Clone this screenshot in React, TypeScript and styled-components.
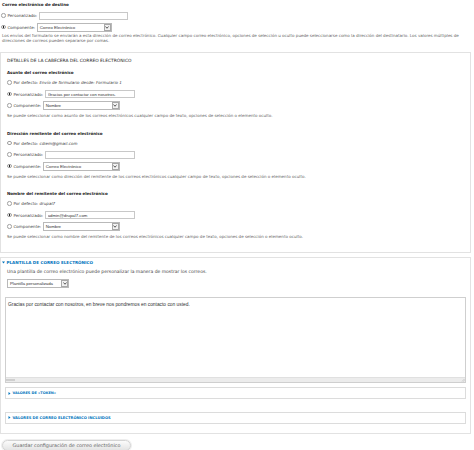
import styled, { createGlobalStyle } from "styled-components";

const GlobalStyle = createGlobalStyle`
  html, body {
    margin: 0;
    padding: 0;
    background: #fff;
  }
  body {
    font-family: "DejaVu Sans", Verdana, sans-serif;
    color: #333;
  }
`;

const Page = styled.div`
  width: 474px;
  padding-top: 2px;
`;

const TopSection = styled.div`
  padding-left: 1px;
`;

const Title = styled.div<{ $indent?: number }>`
  height: 6px;
  line-height: 6px;
  font-size: 4px;
  font-weight: bold;
  color: #222;
  white-space: nowrap;
  padding-left: ${(p) => p.$indent ?? 0}px;
`;

const Label = styled(Title)<{ $top: number }>`
  margin-top: ${(p) => p.$top}px;
`;

const RadioRow = styled.div<{ $top: number }>`
  display: flex;
  align-items: center;
  height: 9px;
  margin-top: ${(p) => p.$top}px;
  font-size: 4.1px;
  color: #444;
  white-space: nowrap;
`;

const Radio = styled.span<{ $checked?: boolean }>`
  box-sizing: border-box;
  width: 4.5px;
  height: 4.5px;
  border-radius: 50%;
  border: 1px solid #a0a0a0;
  background: ${(p) => (p.$checked ? "radial-gradient(circle, #222 0 45%, #fff 55%)" : "#fff")};
  flex: none;
`;

const RadioText = styled.span`
  margin-left: 2px;
  margin-right: 1.5px;
  em {
    font-style: italic;
  }
`;

const TextInput = styled.input<{ $w: number }>`
  box-sizing: border-box;
  width: ${(p) => p.$w}px;
  height: 8px;
  border: 1px solid #c8c8c8;
  padding: 0 2px;
  margin: 0;
  font-family: "Liberation Sans", Arial, sans-serif;
  font-size: 4.3px;
  color: #333;
  background: #fff;
  outline: none;
`;

const SelectBox = styled.div<{ $w: number }>`
  box-sizing: border-box;
  width: ${(p) => p.$w}px;
  height: 9px;
  border: 1px solid #b9b9b9;
  display: flex;
  align-items: center;
  background: #fff;
  font-family: "Liberation Sans", Arial, sans-serif;
  font-size: 4.3px;
  color: #333;
`;

const SelectText = styled.span`
  flex: 1;
  padding-left: 2px;
  white-space: nowrap;
  overflow: hidden;
`;

const SelectArrow = styled.span`
  box-sizing: border-box;
  width: 7px;
  height: 7px;
  border: 1px solid #a8a8a8;
  background: #f2f2f2;
  display: flex;
  align-items: center;
  justify-content: center;
  flex: none;
`;

const Description = styled.div<{ $top: number; $indent?: number }>`
  margin-top: ${(p) => p.$top}px;
  padding-left: ${(p) => p.$indent ?? 0}px;
  font-size: 4.05px;
  line-height: 5px;
  color: #666;
  padding-right: 6px;
`;

const Fieldset = styled.section<{ $top: number; $pad: string }>`
  margin: ${(p) => p.$top}px 3px 0 0;
  border: 1px solid #e2e2e2;
  padding: ${(p) => p.$pad};
  background: #fff;
`;

const Legend = styled.div`
  height: 6px;
  line-height: 6px;
  font-size: 4.4px;
  color: #222;
  white-space: nowrap;
`;

const LinkLegend = styled.div<{ $size: number; $shift?: number }>`
  display: flex;
  align-items: center;
  gap: 1.5px;
  height: 6px;
  margin-left: ${(p) => p.$shift ?? 0}px;
  font-size: ${(p) => p.$size}px;
  font-weight: bold;
  color: #0074bd;
  white-space: nowrap;
`;

const Plain = styled.div<{ $top: number }>`
  margin-top: ${(p) => p.$top}px;
  padding-left: 2px;
  height: 6px;
  line-height: 6px;
  font-size: 4.5px;
  color: #444;
  white-space: nowrap;
`;

const SelectWrap = styled.div<{ $top: number }>`
  margin-top: ${(p) => p.$top}px;
  padding-left: 2px;
`;

const TextArea = styled.div`
  margin-top: 9px;
  height: 84px;
  border: 1px solid #cfcfcf;
  display: flex;
  flex-direction: column;
`;

const TextAreaBody = styled.div`
  flex: 1;
  padding: 4px 2px 0;
  font-family: "Liberation Sans", Arial, sans-serif;
  font-size: 4.85px;
  color: #333;
  white-space: nowrap;
`;

const Grippie = styled.div`
  height: 4px;
  background: #ececec;
  border-top: 1px solid #e0e0e0;
  display: flex;
  align-items: center;
  justify-content: space-between;
`;

const GrippieThumb = styled.span`
  width: 9px;
  height: 2px;
  background: #cfcfcf;
`;

const SubFieldset = styled.div<{ $top: number }>`
  margin-top: ${(p) => p.$top}px;
  height: 12px;
  box-sizing: border-box;
  border: 1px solid #dcdcdc;
  padding-left: 2px;
  display: flex;
  align-items: center;
`;

const Button = styled.button`
  display: block;
  margin: 5.5px 0 0 2px;
  box-sizing: border-box;
  width: 129px;
  height: 11px;
  padding: 0;
  border: 1px solid #d4d4d4;
  border-radius: 6px;
  background: linear-gradient(#fbfbfb, #e4e4e4);
  font-family: "DejaVu Sans", Verdana, sans-serif;
  font-size: 4.9px;
  color: #666;
  box-shadow: 0 0 0 1px #eee;
`;

const Chevron = () => (
  <svg width="4" height="3" viewBox="0 0 8 6">
    <path d="M1 1 L4 4.5 L7 1" fill="none" stroke="#333" strokeWidth="1.6" />
  </svg>
);

const Tri = ({ open }: { open?: boolean }) => (
  <svg width="3" height="3" viewBox="0 0 6 6">
    {open ? <path d="M0 1 H6 L3 5 Z" fill="#0074bd" /> : <path d="M1 0 V6 L5 3 Z" fill="#0074bd" />}
  </svg>
);

const Select = ({ w, value }: { w: number; value: string }) => (
  <SelectBox $w={w}>
    <SelectText>{value}</SelectText>
    <SelectArrow>
      <Chevron />
    </SelectArrow>
  </SelectBox>
);

interface Group {
  title: string;
  def: React.ReactNode;
  value: string;
  comp: string;
  checked: "def" | "custom" | "comp";
  desc: string;
}

const groups: Group[] = [
  {
    title: "Asunto del correo electrónico",
    def: <em>Envío de formulario desde: Formulario 1</em>,
    value: "Gracias por contactar con nosotros.",
    comp: "Nombre",
    checked: "custom",
    desc: "Se puede seleccionar como asunto de los correos electrónicos cualquier campo de texto, opciones de selección o elemento oculto.",
  },
  {
    title: "Dirección remitente del correo electrónico",
    def: <em>cdiem@gmail.com</em>,
    value: "",
    comp: "Correo Electrónico",
    checked: "comp",
    desc: "Se puede seleccionar como dirección del remitente de los correos electrónicos cualquier campo de texto, opciones de selección o elemento oculto.",
  },
  {
    title: "Nombre del remitente del correo electrónico",
    def: <em>drupal7</em>,
    value: "admin@drupal7.com",
    comp: "Nombre",
    checked: "custom",
    desc: "Se puede seleccionar como nombre del remitente de los correos electrónicos cualquier campo de texto, opciones de selección o elemento oculto.",
  },
];

export default function App() {
  return (
    <Page>
      <GlobalStyle />
      <TopSection>
        <Title $indent={1}>Correo electrónico de destino</Title>
        <RadioRow $top={3}>
          <Radio />
          <RadioText>Personalizado:</RadioText>
          <TextInput $w={89} readOnly value="" />
        </RadioRow>
        <RadioRow $top={2.5}>
          <Radio $checked />
          <RadioText>Componente:</RadioText>
          <Select w={75} value="Correo Electrónico" />
        </RadioRow>
        <Description $top={1} $indent={1}>
          Los envíos del formulario se enviarán a esta dirección de correo electrónico. Cualquier campo correo electrónico, opciones de selección u oculto puede seleccionarse como la dirección del destinatario. Los valores múltiples de direcciones de correos pueden separarse por comas.
        </Description>
      </TopSection>

      <Fieldset $top={9.5} $pad="5px 0 12.5px 6px">
        <Legend>DETALLES DE LA CABECERA DEL CORREO ELECTRÓNICO</Legend>
        {groups.map((g, i) => (
          <div key={g.title}>
            <Label $top={i === 0 ? 6 : 12.5}>{g.title}</Label>
            <RadioRow $top={2}>
              <Radio $checked={g.checked === "def"} />
              <RadioText>Por defecto: {g.def}</RadioText>
            </RadioRow>
            <RadioRow $top={2.5}>
              <Radio $checked={g.checked === "custom"} />
              <RadioText>Personalizado:</RadioText>
              <TextInput $w={90} readOnly value={g.value} />
            </RadioRow>
            <RadioRow $top={2.5}>
              <Radio $checked={g.checked === "comp"} />
              <RadioText>Componente:</RadioText>
              <Select w={77} value={g.comp} />
            </RadioRow>
            <Description $top={3}>{g.desc}</Description>
          </div>
        ))}
      </Fieldset>

      <Fieldset $top={4.5} $pad="1px 4px 9.5px 4px">
        <LinkLegend $size={4.1} $shift={-3}>
          <Tri open />
          PLANTILLA DE CORREO ELECTRÓNICO
        </LinkLegend>
        <Plain $top={4}>Una plantilla de correo electrónico puede personalizar la manera de mostrar los correos.</Plain>
        <SelectWrap $top={4}>
          <Select w={62} value="Plantilla personalizada" />
        </SelectWrap>
        <TextArea>
          <TextAreaBody>Gracias por contactar con nosotros, en breve nos pondremos en contacto con usted.</TextAreaBody>
          <Grippie>
            <GrippieThumb />
            <svg width="4" height="4" viewBox="0 0 8 8">
              <path d="M7 2 L2 7 M7 5 L5 7" stroke="#aaa" strokeWidth="1" />
            </svg>
          </Grippie>
        </TextArea>
        <SubFieldset $top={4}>
          <LinkLegend $size={3.5}>
            <Tri />
            VALORES DE «TOKEN»
          </LinkLegend>
        </SubFieldset>
        <SubFieldset $top={12.5}>
          <LinkLegend $size={3.7}>
            <Tri />
            VALORES DE CORREO ELECTRÓNICO INCLUIDOS
          </LinkLegend>
        </SubFieldset>
      </Fieldset>

      <Button>Guardar configuración de correo electrónico</Button>
    </Page>
  );
}
